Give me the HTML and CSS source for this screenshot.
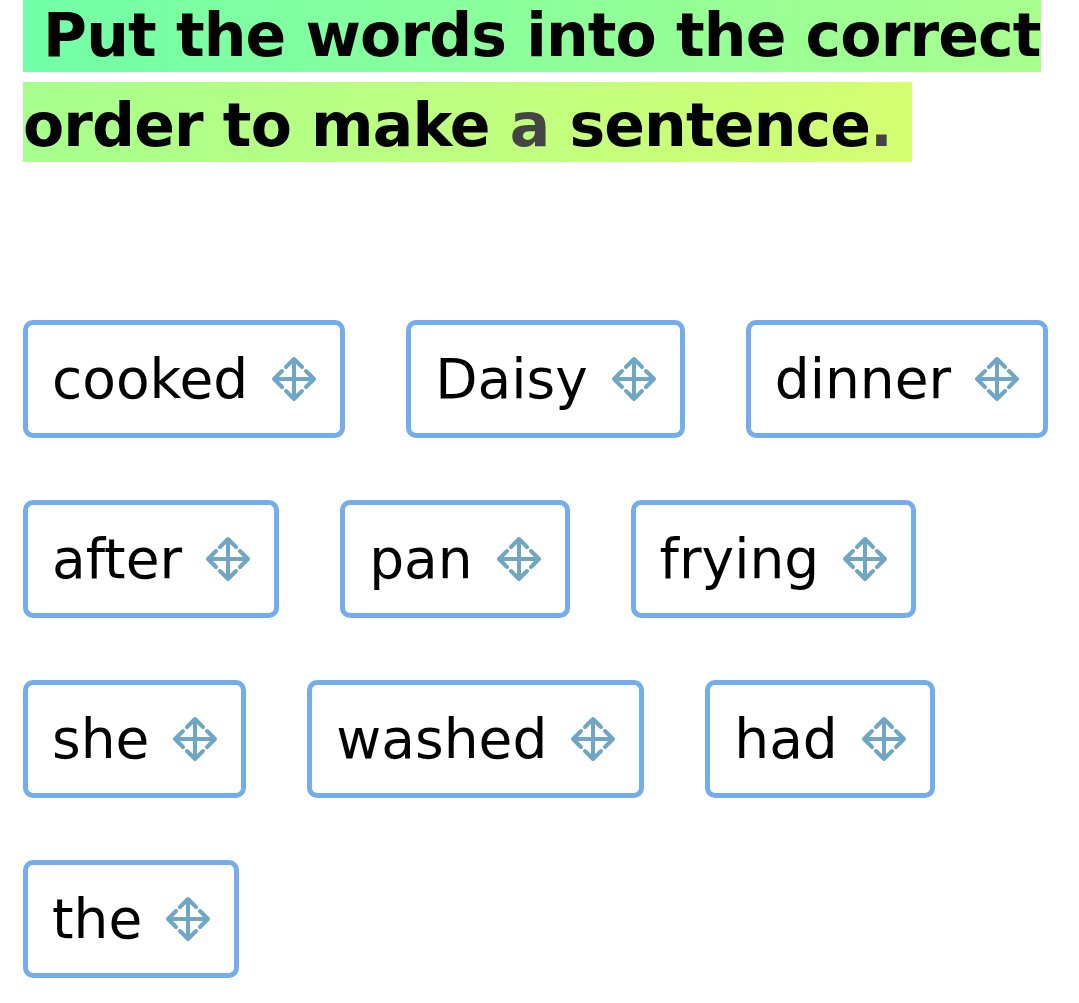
FILE: index.html
```html
<!DOCTYPE html>
<html lang="en">
<head>
<meta charset="utf-8">
<title>Sentence order</title>
<link rel="stylesheet" href="styles.css">
</head>
<body>
<h1 class="title"><span class="mark">&nbsp;Put the words into the correct<br>order to make <span class="dim">a</span> sentence<span class="dim">.</span>&nbsp;</span></h1>

<div class="chips">
  <div class="chip"><span class="word">cooked</span><svg class="move" viewBox="0 0 48 48"><path d="M24 4v40M4 24h40M16 12l8-8 8 8M16 36l8 8 8-8M12 16l-8 8 8 8M36 16l8 8-8 8"/></svg></div>
  <div class="chip"><span class="word">Daisy</span><svg class="move" viewBox="0 0 48 48"><path d="M24 4v40M4 24h40M16 12l8-8 8 8M16 36l8 8 8-8M12 16l-8 8 8 8M36 16l8 8-8 8"/></svg></div>
  <div class="chip"><span class="word">dinner</span><svg class="move" viewBox="0 0 48 48"><path d="M24 4v40M4 24h40M16 12l8-8 8 8M16 36l8 8 8-8M12 16l-8 8 8 8M36 16l8 8-8 8"/></svg></div>
  <div class="chip"><span class="word">after</span><svg class="move" viewBox="0 0 48 48"><path d="M24 4v40M4 24h40M16 12l8-8 8 8M16 36l8 8 8-8M12 16l-8 8 8 8M36 16l8 8-8 8"/></svg></div>
  <div class="chip"><span class="word">pan</span><svg class="move" viewBox="0 0 48 48"><path d="M24 4v40M4 24h40M16 12l8-8 8 8M16 36l8 8 8-8M12 16l-8 8 8 8M36 16l8 8-8 8"/></svg></div>
  <div class="chip"><span class="word">frying</span><svg class="move" viewBox="0 0 48 48"><path d="M24 4v40M4 24h40M16 12l8-8 8 8M16 36l8 8 8-8M12 16l-8 8 8 8M36 16l8 8-8 8"/></svg></div>
  <div class="chip"><span class="word">she</span><svg class="move" viewBox="0 0 48 48"><path d="M24 4v40M4 24h40M16 12l8-8 8 8M16 36l8 8 8-8M12 16l-8 8 8 8M36 16l8 8-8 8"/></svg></div>
  <div class="chip"><span class="word">washed</span><svg class="move" viewBox="0 0 48 48"><path d="M24 4v40M4 24h40M16 12l8-8 8 8M16 36l8 8 8-8M12 16l-8 8 8 8M36 16l8 8-8 8"/></svg></div>
  <div class="chip"><span class="word">had</span><svg class="move" viewBox="0 0 48 48"><path d="M24 4v40M4 24h40M16 12l8-8 8 8M16 36l8 8 8-8M12 16l-8 8 8 8M36 16l8 8-8 8"/></svg></div>
  <div class="chip"><span class="word">the</span><svg class="move" viewBox="0 0 48 48"><path d="M24 4v40M4 24h40M16 12l8-8 8 8M16 36l8 8 8-8M12 16l-8 8 8 8M36 16l8 8-8 8"/></svg></div>
</div>
</body>
</html>
```

FILE: styles.css
```css
html, body {
  margin: 0;
  padding: 0;
  background: #ffffff;
}

body {
  font-family: "DejaVu Sans", "Liberation Sans", sans-serif;
  color: #000;
  overflow: hidden;
}

.title {
  margin: -10px 0 0 0;
  padding: 0 0 0 23px;
  font-size: 60px;
  font-weight: 700;
  line-height: 90px;
  letter-spacing: -0.85px;
}

.mark {
  padding: 8px 0 2px;
  background: linear-gradient(to right, #72ffa7 0%, #a6ff8e 52%, #d4ff72 100%);
  -webkit-box-decoration-break: slice;
  box-decoration-break: slice;
}

.dim {
  color: #444444;
}

.chips {
  display: flex;
  flex-wrap: wrap;
  column-gap: 61px;
  row-gap: 62px;
  padding: 150px 0 0 23px;
}

.chip {
  box-sizing: border-box;
  height: 118px;
  display: flex;
  align-items: center;
  gap: 22px;
  padding: 0 22px 0 24px;
  border: 5px solid #74acec;
  border-radius: 10px;
  background: #fff;
}

.word {
  font-size: 55px;
  line-height: 1;
  color: #000;
}

.move {
  width: 48px;
  height: 48px;
  flex: none;
  margin-top: -1px;
  fill: none;
  stroke: #6fa6c4;
  stroke-width: 4;
  stroke-linecap: round;
  stroke-linejoin: round;
}
```
